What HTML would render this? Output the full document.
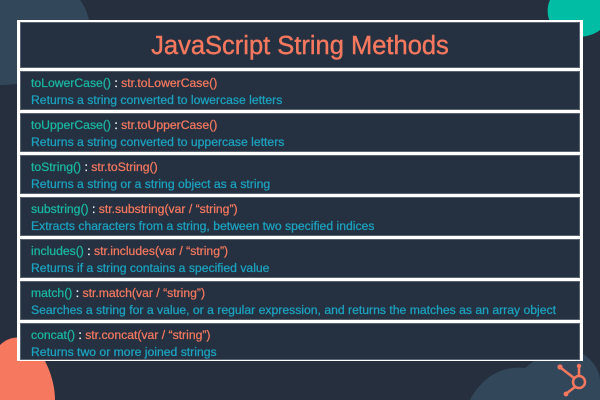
<!DOCTYPE html>
<html><head><style>
*{margin:0;padding:0;box-sizing:border-box}
body{width:600px;height:400px;background:#252f3e;position:relative;overflow:hidden;font-family:"Liberation Sans",sans-serif}
.blob{position:absolute}
#frame{position:absolute;left:17px;top:20px;width:566px;height:341px;background:#fff;padding:2px 3px 3px 3px}
.box{background:#253140;border:1px solid #5a6470;position:relative}
.title{height:46px;color:#f5785f;font-size:25.5px;text-align:center;line-height:46px;margin-bottom:3px;-webkit-text-stroke:0.4px #f5785f}
.row{height:39px;margin-bottom:3px;padding:3px 0 0 10px;font-size:12.2px;line-height:16.5px;-webkit-text-stroke:0.25px currentColor}
.row:last-child{margin-bottom:0;height:37px}
.n{color:#19b8a3}.c{color:#fff}.m{color:#f5785f}.d{color:#1ba3c1}
</style></head><body>
<svg class="blob" style="left:0;top:0" width="600" height="400">
<path d="M0 0 H80 C95 20 92 45 72 60 C52 75 30 85 0 85 Z" fill="#33475b"/>
<path d="M550 0 H600 V30 C590 38 570 40 558 32 C548 25 545 10 550 0 Z" fill="#01bda4"/>
<path d="M0 345 C10 335 25 335 35 345 C50 365 55 385 55 400 H0 Z" fill="#f5785f"/>
<path d="M470 400 C480 380 500 365 525 368 C540 355 560 345 575 350 C590 355 600 370 600 380 V400 Z" fill="#33475b"/>
</svg>
<svg class="blob" style="left:552px;top:362px" width="40" height="36" viewBox="0 0 40 36">
<g stroke="#f5785f" stroke-width="2.5" fill="none">
<circle cx="27" cy="20" r="6"/>
<line x1="27" y1="14" x2="27" y2="5"/>
<line x1="22" y1="16" x2="9" y2="6"/>
<line x1="23" y1="25" x2="15" y2="31"/>
</g>
<circle cx="27" cy="4" r="2.2" fill="#f5785f"/>
<circle cx="8" cy="5" r="2.6" fill="#f5785f"/>
<circle cx="14" cy="32" r="2.4" fill="#f5785f"/>
</svg>
<div id="frame">
<div class="box title">JavaScript String Methods</div>
<div class="box row"><span class="n">toLowerCase()</span> <span class="c">:</span> <span class="m">str.toLowerCase()</span><br><span class="d">Returns a string converted to lowercase letters</span></div>
<div class="box row"><span class="n">toUpperCase()</span> <span class="c">:</span> <span class="m">str.toUpperCase()</span><br><span class="d">Returns a string converted to uppercase letters</span></div>
<div class="box row"><span class="n">toString()</span> <span class="c">:</span> <span class="m">str.toString()</span><br><span class="d">Returns a string or a string object as a string</span></div>
<div class="box row"><span class="n">substring()</span> <span class="c">:</span> <span class="m">str.substring(var / “string”)</span><br><span class="d">Extracts characters from a string, between two specified indices</span></div>
<div class="box row"><span class="n">includes()</span> <span class="c">:</span> <span class="m">str.includes(var / “string”)</span><br><span class="d">Returns if a string contains a specified value</span></div>
<div class="box row"><span class="n">match()</span> <span class="c">:</span> <span class="m">str.match(var / “string”)</span><br><span class="d">Searches a string for a value, or a regular expression, and returns the matches as an array object</span></div>
<div class="box row"><span class="n">concat()</span> <span class="c">:</span> <span class="m">str.concat(var / “string”)</span><br><span class="d">Returns two or more joined strings</span></div>
</div>
</body></html>
